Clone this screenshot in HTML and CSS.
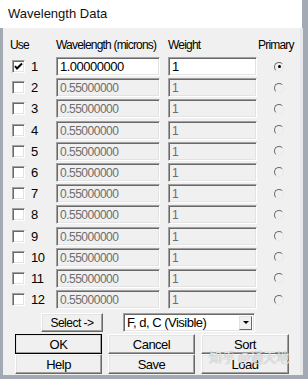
FILE: index.html
```html
<!DOCTYPE html>
<html lang="en">
	<head>
		<meta charset="UTF-8">
		<title>Wavelength Data</title>
		<link rel="stylesheet" href="styles.css">
	</head>
	<body>
		<div class="window">
			<div class="titlebar">Wavelength Data</div>

			<div class="panel">
				<div class="grid">
					<div class="head head-use">Use</div>
					<div class="head">Wavelength (microns)</div>
					<div class="head">Weight</div>
					<div class="head head-primary">Primary</div>
				</div>

				<div class="grid rows" id="rows"></div>

				<div class="select-row">
					<div class="btn btn-select">Select -&gt;</div>
					<div class="combo">
						<span class="combo-text">F, d, C (Visible)</span>
						<span class="combo-arrow"></span>
					</div>
				</div>

				<div class="buttons">
					<div class="btn btn-default">OK</div>
					<div class="btn">Cancel</div>
					<div class="btn">Sort</div>
					<div class="btn">Help</div>
					<div class="btn">Save</div>
					<div class="btn">Load</div>
				</div>

				<!-- watermark from the screenshot -->
				<div class="watermark">知乎 @通天地</div>
			</div>
		</div>

		<script>
			const rows = document.getElementById('rows');
			for (let i = 1; i <= 12; i++) {
				const on = i === 1;
				rows.insertAdjacentHTML('beforeend', `
					<div class="use">
						<span class="check">${on ? '<svg width="9" height="9" viewBox="0 0 9 9"><path d="M1 4 L3 6.5 L8 1.5" fill="none" stroke="#000" stroke-width="2"/></svg>' : ''}</span>
						<span class="num">${i}</span>
					</div>
					<div class="field ${on ? '' : 'disabled'}">${on ? '1.00000000' : '0.55000000'}</div>
					<div class="field ${on ? '' : 'disabled'}">1</div>
					<div class="primary"><span class="radio ${on ? 'checked' : ''}"></span></div>
				`);
			}
		</script>
	</body>
</html>
```

FILE: styles.css
```css
body {
	margin: 0;
	font-family: "Liberation Sans", Arial, sans-serif;
	font-size: 12px;
	letter-spacing: -0.5px;
	color: #000;
	background: #a4aab3;
}

.window {
	width: 308px;
	height: 379px;
	display: flex;
	flex-direction: column;
}

.titlebar {
	height: 28px;
	margin-right: 6px;
	padding-left: 8px;
	background: #fff;
	font-size: 13px;
	letter-spacing: 0;
	line-height: 28px;
	color: #111;
}

.panel {
	position: relative;
	height: 347px;
	margin: 0 5px 0 3px;
	padding: 9px 0 0 9px;
	box-sizing: border-box;
	background: #f0f0f0;
	border-right: 3px solid #e6e8eb;
}

.grid {
	display: grid;
	grid-template-columns: 44px 112px 89px 1fr;
}

.head {
	height: 20px;
	line-height: 17px;
	letter-spacing: -0.8px;
}

.head-use {
	margin-left: -2px;
}

.head-primary {
	margin-left: 1px;
}

.rows {
	grid-template-rows: repeat(12, 21.2px);
}

.use {
	display: flex;
	align-items: center;
	height: 19px;
}

.check {
	width: 11px;
	height: 11px;
	display: flex;
	align-items: center;
	justify-content: center;
	background: #fff;
	border-top: 1px solid #a0a0a0;
	border-left: 1px solid #a0a0a0;
	border-right: 1px solid #fff;
	border-bottom: 1px solid #fff;
	box-shadow: inset 1px 1px #696969, inset -1px -1px #e3e3e3;
}

.num {
	margin-left: 6px;
	font-size: 13px;
}

.field {
	width: 104px;
	height: 19px;
	box-sizing: border-box;
	padding-left: 3px;
	line-height: 18px;
	background: #fff;
	border-top: 1px solid #a0a0a0;
	border-left: 1px solid #a0a0a0;
	border-right: 1px solid #fff;
	border-bottom: 1px solid #fff;
	box-shadow: inset 1px 1px #696969, inset -1px -1px #e3e3e3;
	font-size: 13px;
}

.field + .field {
	width: 89px;
}

.field.disabled {
	background: #f0f0f0;
	color: #6d6d6d;
	font-size: 12px;
}

.primary {
	display: flex;
	align-items: center;
	padding-left: 17px;
	height: 19px;
}

.radio {
	width: 8px;
	height: 8px;
	border-radius: 50%;
	border: 1px solid;
	border-color: #6a6a6a #e8e8e8 #e8e8e8 #6a6a6a;
	display: flex;
	align-items: center;
	justify-content: center;
}

.radio.checked::after {
	content: "";
	width: 3px;
	height: 3px;
	border-radius: 50%;
	background: #000;
}

.select-row {
	display: flex;
	gap: 20px;
	margin: 2px 0 0 29px;
}

.btn {
	height: 19px;
	box-sizing: border-box;
	display: flex;
	align-items: center;
	justify-content: center;
	background: #f0f0f0;
	border-top: 1px solid #fff;
	border-left: 1px solid #fff;
	border-right: 1px solid #696969;
	border-bottom: 1px solid #696969;
	box-shadow: inset -1px -1px #a0a0a0, inset 1px 1px #e3e3e3;
}

.btn-select {
	width: 62px;
}

.combo {
	width: 132px;
	height: 19px;
	box-sizing: border-box;
	display: flex;
	align-items: center;
	justify-content: space-between;
	padding: 0 2px 0 3px;
	background: #fff;
	border-top: 1px solid #a0a0a0;
	border-left: 1px solid #a0a0a0;
	border-right: 1px solid #fff;
	border-bottom: 1px solid #fff;
	box-shadow: inset 1px 1px #696969, inset -1px -1px #e3e3e3;
	font-size: 13px;
}

.combo-arrow {
	width: 13px;
	height: 14px;
	box-sizing: border-box;
	display: flex;
	align-items: center;
	justify-content: center;
	background: #f0f0f0;
	border-top: 1px solid #e3e3e3;
	border-left: 1px solid #e3e3e3;
	border-right: 1px solid #696969;
	border-bottom: 1px solid #696969;
}

.combo-arrow::after {
	content: "";
	border-left: 3px solid transparent;
	border-right: 3px solid transparent;
	border-top: 3px solid #000;
}

.buttons {
	display: grid;
	grid-template-columns: 87px 87px 88px;
	grid-auto-rows: 20px;
	column-gap: 6px;
	margin: 2px 0 0 3px;
	font-size: 13px;
}

.buttons .btn {
	height: 20px;
}

.btn-default {
	outline: 1px solid #000;
	outline-offset: -1px;
	border-right-color: #000;
	border-bottom-color: #000;
}

.watermark {
	position: absolute;
	left: 206px;
	top: 319px;
	font-family: "Noto Sans CJK SC", sans-serif;
	font-size: 13px;
	letter-spacing: 0;
	color: rgba(255, 255, 255, 0.75);
	text-shadow: 0 0 1px #8a8a8a;
}
```
